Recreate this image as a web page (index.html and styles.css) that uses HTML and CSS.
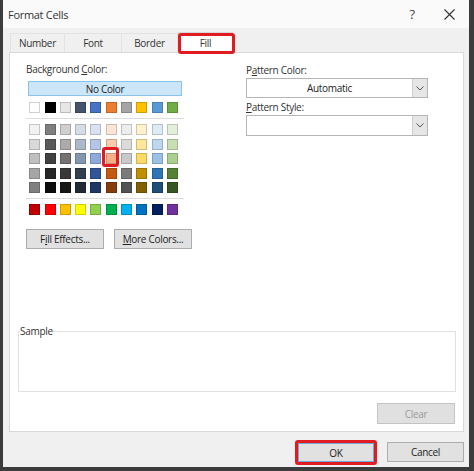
FILE: index.html
```html
<!DOCTYPE html>
<html>
<head>
<meta charset="utf-8">
<link rel="stylesheet" href="styles.css">
</head>
<body>
<div class="win">
  <div class="titlebar">
    <span class="title">Format Cells</span>
    <span class="help">?</span>
    <svg class="close" width="11" height="11" viewBox="0 0 11 11"><path d="M0.5 0.5 L10.5 10.5 M10.5 0.5 L0.5 10.5" stroke="#333" stroke-width="1.1" fill="none"/></svg>
  </div>
  <div class="body">
    <div class="tabs">
      <div class="tab t-number">Number</div>
      <div class="tab t-font">Font</div>
      <div class="tab t-border">Border</div>
      <div class="tab t-fill active"><span>Fill</span></div>
    </div>
    <div class="panel">
      <div class="top">
        <div class="left">
          <div class="label">Background <u>C</u>olor:</div>
          <div class="nocolor">No Color</div>
          <div class="swrow theme">
            <i style="background:#FFFFFF"></i><i style="background:#000000"></i><i style="background:#E7E6E6"></i><i style="background:#44546A"></i><i style="background:#4472C4"></i><i style="background:#ED7D31"></i><i style="background:#A5A5A5"></i><i style="background:#FFC000"></i><i style="background:#5B9BD5"></i><i style="background:#70AD47"></i>
          </div>
          <div class="sep"></div>
          <div class="grid">
            <i style="background:#F2F2F2"></i><i style="background:#7F7F7F"></i><i style="background:#D0CECE"></i><i style="background:#D6DCE4"></i><i style="background:#D9E1F2"></i><i style="background:#FCE4D6"></i><i style="background:#EDEDED"></i><i style="background:#FFF2CC"></i><i style="background:#DDEBF7"></i><i style="background:#E2EFDA"></i>
            <i style="background:#D9D9D9"></i><i style="background:#595959"></i><i style="background:#AEAAAA"></i><i style="background:#ACB9CA"></i><i style="background:#B4C6E7"></i><i style="background:#F8CBAD"></i><i style="background:#DBDBDB"></i><i style="background:#FFE699"></i><i style="background:#BDD7EE"></i><i style="background:#C6E0B4"></i>
            <i style="background:#BFBFBF"></i><i style="background:#404040"></i><i style="background:#757171"></i><i style="background:#8497B0"></i><i style="background:#8EA9DB"></i><i class="sel" style="background:#F4B084"></i><i style="background:#C9C9C9"></i><i style="background:#FFD966"></i><i style="background:#9BC2E6"></i><i style="background:#A9D08E"></i>
            <i style="background:#A6A6A6"></i><i style="background:#262626"></i><i style="background:#3A3838"></i><i style="background:#333F4F"></i><i style="background:#305496"></i><i style="background:#C65911"></i><i style="background:#7B7B7B"></i><i style="background:#BF8F00"></i><i style="background:#2F75B5"></i><i style="background:#548235"></i>
            <i style="background:#808080"></i><i style="background:#0D0D0D"></i><i style="background:#161616"></i><i style="background:#222B35"></i><i style="background:#203764"></i><i style="background:#833C0C"></i><i style="background:#525252"></i><i style="background:#806000"></i><i style="background:#1F4E78"></i><i style="background:#375623"></i>
          </div>
          <div class="sep"></div>
          <div class="swrow std">
            <i style="background:#C00000"></i><i style="background:#FF0000"></i><i style="background:#FFC000"></i><i style="background:#FFFF00"></i><i style="background:#92D050"></i><i style="background:#00B050"></i><i style="background:#00B0F0"></i><i style="background:#0070C0"></i><i style="background:#002060"></i><i style="background:#7030A0"></i>
          </div>
          <div class="btnrow">
            <div class="btn">F<u>i</u>ll Effects...</div>
            <div class="btn"><u>M</u>ore Colors...</div>
          </div>
        </div>
        <div class="right">
          <div class="label">P<u>a</u>ttern Color:</div>
          <div class="combo">
            <span class="val">Automatic</span>
            <span class="arrow"><svg width="8" height="5" viewBox="0 0 8 5"><path d="M0.5 0.5 L4 4 L7.5 0.5" stroke="#555" stroke-width="1" fill="none"/></svg></span>
          </div>
          <div class="label second"><u>P</u>attern Style:</div>
          <div class="combo tall">
            <span class="val"></span>
            <span class="arrow"><svg width="8" height="5" viewBox="0 0 8 5"><path d="M0.5 0.5 L4 4 L7.5 0.5" stroke="#555" stroke-width="1" fill="none"/></svg></span>
          </div>
        </div>
      </div>
      <fieldset class="sample"><legend>Sample</legend></fieldset>
      <div class="clearrow"><div class="btn disabled">Clear</div></div>
    </div>
    <div class="footer">
      <div class="okwrap"><div class="btn ok">OK</div></div>
      <div class="btn cancel">Cancel</div>
    </div>
  </div>
</div>
</body>
</html>
```
FILE: styles.css
```css
html, body {
  margin: 0;
  padding: 0;
  background: #3c3c3c;
  width: 474px;
  height: 471px;
  overflow: hidden;
}
.win {
  margin-left: 3px;
  width: 466px;
  height: 467px;
  display: flex;
  flex-direction: column;
  font-family: "Open Sans", "Noto Sans", sans-serif;
  font-size: 10px;
  letter-spacing: -0.3px;
  color: #222;
}
u { text-decoration: underline; text-underline-offset: 1px; }
.titlebar {
  height: 28px;
  background: #fafafa;
  display: flex;
  align-items: center;
}
.title {
  margin-left: 5px;
  font-size: 11px;
  letter-spacing: -0.3px;
  color: #333;
  margin-top: 1px;
}
.help {
  margin-left: auto;
  margin-right: 29px;
  font-size: 13px;
  letter-spacing: 0;
  color: #444;
}
.close {
  margin-right: 14px;
}
.body {
  flex: 1;
  background: #f0f0f0;
  display: flex;
  flex-direction: column;
}
.tabs {
  display: flex;
  margin-left: 7px;
  margin-top: 5px;
  height: 19px;
  position: relative;
  z-index: 2;
}
.tab {
  box-sizing: border-box;
  height: 19px;
  border: 1px solid #e3e3e3;
  border-bottom: none;
  border-right: none;
  display: flex;
  align-items: center;
  justify-content: center;
  color: #333;
  background: #f0f0f0;
}
.t-number { width: 54px; }
.t-font { width: 57px; }
.t-border { width: 57px; border-right: 1px solid #e3e3e3; }
.t-fill { width: 55px; }
.tab.active {
  background: #fff;
  height: 20px;
  margin-top: -1px;
  border: 1px solid #d9d9d9;
  border-bottom: none;
  position: relative;
}
.tab.active::after {
  content: "";
  position: absolute;
  left: -1px;
  top: 0px;
  width: 51px;
  height: 15px;
  border: 3px solid #e01b22;
  border-radius: 3px;
}
.panel {
  margin-left: 6px;
  width: 455px;
  height: 380px;
  box-sizing: border-box;
  background: #fff;
  border: 1px solid #d9d9d9;
  display: flex;
  flex-direction: column;
}
.top {
  display: flex;
  margin-top: 10px;
  margin-left: 16px;
}
.left {
  width: 158px;
  flex-shrink: 0;
}
.label {
  line-height: 13px;
  height: 13px;
  color: #333;
  white-space: nowrap;
}
.nocolor {
  margin-top: 5px;
  margin-left: 2px;
  width: 154px;
  height: 15px;
  box-sizing: border-box;
  background: #cce6f9;
  border: 1px solid #8cc2ea;
  display: flex;
  align-items: center;
  justify-content: center;
  color: #222;
}
.swrow {
  display: flex;
  gap: 4.3px;
  padding-left: 3.3px;
  margin-top: 6px;
}
.swrow.std { margin-top: 5px; }
.swrow i, .grid i {
  display: block;
  width: 11px;
  height: 11px;
  flex-shrink: 0;
  box-sizing: border-box;
  border: 1px solid rgba(0,0,0,0.18);
}
.sep {
  height: 1px;
  background: #dcdcdc;
  margin-top: 5px;
}
.grid {
  display: grid;
  grid-template-columns: repeat(10, 11px);
  column-gap: 4.3px;
  row-gap: 3.5px;
  padding-left: 3.3px;
  margin-top: 5px;
}
.grid i.sel { position: relative; }
.grid i.sel::after {
  content: "";
  position: absolute;
  left: -5px;
  top: -7px;
  width: 11px;
  height: 14px;
  border: 3px solid #e01b22;
  border-radius: 3px;
}
.btnrow {
  display: flex;
  gap: 10px;
  margin-top: 14px;
}
.btn {
  box-sizing: border-box;
  width: 78px;
  height: 20px;
  flex-shrink: 0;
  background: #e1e1e1;
  border: 1px solid #adadad;
  display: flex;
  align-items: center;
  justify-content: center;
  color: #222;
  white-space: nowrap;
}
.right {
  margin-left: 62px;
  width: 182px;
  margin-top: 1px;
}
.label.second { margin-top: 3px; }
.combo {
  margin-top: 1px;
  height: 20px;
  box-sizing: border-box;
  border: 1px solid #b5b5b5;
  background: #fff;
  display: flex;
}
.combo.tall { height: 21px; }
.combo .val {
  flex: 1;
  display: flex;
  align-items: center;
  justify-content: center;
  color: #222;
}
.combo .arrow {
  width: 14px;
  background: #e6e6e6;
  border-left: 1px solid #cfcfcf;
  display: flex;
  align-items: center;
  justify-content: center;
}
.sample {
  margin: 77px 0 0 8px;
  width: 438px;
  height: 66px;
  box-sizing: border-box;
  border: 1px solid #e0e0e0;
  padding: 0;
}
.sample legend {
  padding: 0;
  margin-left: 1px;
  color: #333;
  line-height: 10px;
}
.clearrow {
  display: flex;
  justify-content: flex-end;
  margin-top: 11px;
  margin-right: 8px;
}
.btn.disabled {
  background: #e0e0e0;
  border-color: #c4c4c4;
  color: #9a9a9a;
  height: 21px;
}
.footer {
  display: flex;
  justify-content: flex-end;
  align-items: flex-start;
  padding-top: 8px;
  padding-right: 5px;
}
.okwrap {
  border: 3px solid #e01b22;
  border-radius: 3px;
  margin-right: 10px;
}
.btn.ok {
  width: 76px;
  height: 19px;
  border: 1px solid #6fa6d6;
}
.btn.cancel {
  margin-top: 2px;
  width: 77px;
}
```
